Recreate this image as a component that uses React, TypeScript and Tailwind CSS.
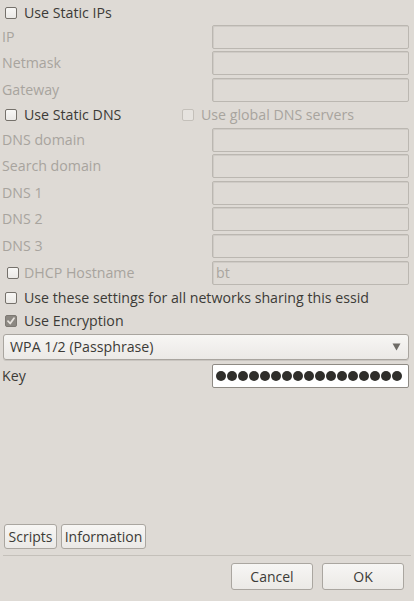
import React from "react";

function Check({ checked = false, disabled = false }: { checked?: boolean; disabled?: boolean }) {
  if (checked) {
    return (
      <span className="inline-flex h-[12px] w-[12px] items-center justify-center rounded-[2px] border border-[#7d7973] bg-[#8c8882]">
        <svg width="10" height="10" viewBox="0 0 10 10">
          <path d="M2 5.2 L4.2 7.5 L8 2.2" fill="none" stroke="#e6e2dd" strokeWidth="1.8" strokeLinecap="round" strokeLinejoin="round" />
        </svg>
      </span>
    );
  }
  return (
    <span
      className={
        disabled
          ? "inline-block h-[12px] w-[12px] rounded-[2px] border border-[#c4c0ba] bg-[#e6e3df]"
          : "inline-block h-[12px] w-[12px] rounded-[2px] border border-[#75716b] bg-gradient-to-b from-[#f8f7f5] to-[#ebe9e6]"
      }
    />
  );
}

function Entry({ text }: { text?: string }) {
  return (
    <div className="flex h-[24px] w-[197px] items-center rounded-[2px] border border-[#bbb7b1] bg-[#dedad5] px-[3px] shadow-[inset_1px_1px_0_#cfcbc6]">
      {text ? <span className="text-[#aaa6a0]">{text}</span> : null}
    </div>
  );
}

function FieldRow({ label, h }: { label: string; h: string }) {
  return (
    <div className={`flex items-start ${h}`}>
      <div className="flex h-[24px] w-[212px] items-center pl-[2px] text-[#a8a49e]">{label}</div>
      <Entry />
    </div>
  );
}

export default function App() {
  return (
    <div
      className="flex h-[601px] w-[414px] flex-col bg-[#dedad5] text-[14.2px] text-[#3c3b37]"
      style={{ fontFamily: '"Open Sans", "DejaVu Sans", sans-serif' }}
    >
      <div className="flex h-[25px] items-center pl-[5px]">
        <Check />
        <span className="ml-[7px]">Use Static IPs</span>
      </div>
      <FieldRow label="IP" h="h-[26px]" />
      <FieldRow label="Netmask" h="h-[27px]" />
      <FieldRow label="Gateway" h="h-[24px]" />
      <div className="flex h-[26px] items-center pl-[5px]">
        <div className="flex w-[177px] items-center">
          <Check />
          <span className="ml-[7px]">Use Static DNS</span>
        </div>
        <div className="flex items-center text-[#a8a49e]">
          <Check disabled />
          <span className="ml-[7px]">Use global DNS servers</span>
        </div>
      </div>
      <FieldRow label="DNS domain" h="h-[26px]" />
      <FieldRow label="Search domain" h="h-[27px]" />
      <FieldRow label="DNS 1" h="h-[26px]" />
      <FieldRow label="DNS 2" h="h-[27px]" />
      <FieldRow label="DNS 3" h="h-[27px]" />
      <div className="flex h-[26px] items-start">
        <div className="flex h-[24px] w-[212px] items-center pl-[7px] text-[#a8a49e]">
          <Check />
          <span className="ml-[5px]">DHCP Hostname</span>
        </div>
        <Entry text="bt" />
      </div>
      <div className="flex h-[22px] items-center pl-[5px]">
        <Check />
        <span className="ml-[7px]">Use these settings for all networks sharing this essid</span>
      </div>
      <div className="flex h-[23px] items-center pl-[5px]">
        <Check checked />
        <span className="ml-[7px]">Use Encryption</span>
      </div>
      <div className="ml-[3px] mt-[2px] flex h-[26px] w-[406px] items-center justify-between rounded-[3px] border border-[#a9a59f] bg-gradient-to-b from-[#f7f6f4] to-[#ebe9e6] pl-[6px] pr-[7px] shadow-[0_1px_0_#c9c5c0]">
        <span>WPA 1/2 (Passphrase)</span>
        <svg width="9" height="8" viewBox="0 0 9 8">
          <path d="M0.5 0.5 H8.5 L4.5 7.5 Z" fill="#6e6b66" />
        </svg>
      </div>
      <div className="mt-[4px] flex h-[24px] items-center">
        <div className="w-[212px] pl-[2px]">Key</div>
        <div className="flex h-[24px] w-[197px] items-center gap-[1px] overflow-hidden rounded-[2px] border border-[#8e8a84] bg-white px-[3px]">
          {Array.from({ length: 17 }).map((_, i) => (
            <span key={i} className="inline-block h-[10px] w-[10px] shrink-0 rounded-full bg-[#2f2e2b]" />
          ))}
        </div>
      </div>
      <div className="flex-1" />
      <div className="flex h-[25px] gap-[4px] pl-[4px]">
        <button className="h-[25px] w-[53px] rounded-[3px] border border-[#aaa6a0] bg-gradient-to-b from-[#f7f6f4] to-[#ebe9e6] text-[14px] text-[#3c3b37]">
          Scripts
        </button>
        <button className="h-[25px] w-[85px] rounded-[3px] border border-[#aaa6a0] bg-gradient-to-b from-[#f7f6f4] to-[#ebe9e6] text-[14px] text-[#3c3b37]">
          Information
        </button>
      </div>
      <div className="mx-[3px] mt-[6px] h-[1px] bg-[#c4c0ba]" />
      <div className="mt-[7px] flex h-[27px] justify-end gap-[9px] pr-[10px]">
        <button className="h-[27px] w-[82px] rounded-[3px] border border-[#aaa6a0] bg-gradient-to-b from-[#f7f6f4] to-[#ebe9e6] text-[14px] text-[#3c3b37]">
          Cancel
        </button>
        <button className="h-[27px] w-[82px] rounded-[3px] border border-[#aaa6a0] bg-gradient-to-b from-[#f7f6f4] to-[#ebe9e6] text-[14px] text-[#3c3b37]">
          OK
        </button>
      </div>
      <div className="h-[11px]" />
    </div>
  );
}
